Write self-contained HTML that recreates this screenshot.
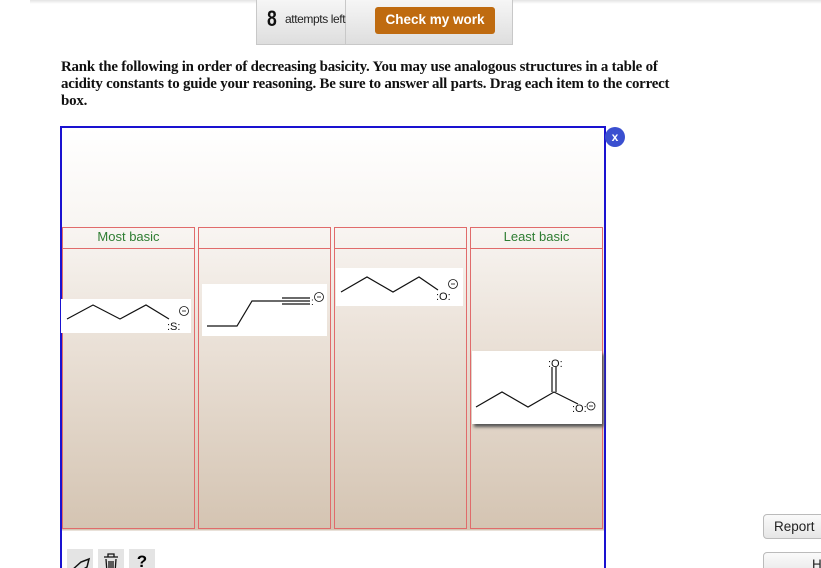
<!DOCTYPE html><html style="width:821px;height:568px;overflow:hidden"><head><style>
*{margin:0;padding:0;box-sizing:border-box}
body{width:821px;height:568px;overflow:hidden;background:#fff;position:relative;font-family:"Liberation Sans",sans-serif}
.a{position:absolute}
.col{position:absolute;top:227px;width:133px;height:302px;border:1px solid #e06b6b}
.hd{position:absolute;left:0;top:0;right:0;height:21px;border-bottom:1px solid #e06b6b;text-align:center;color:#2e7d32;font-size:13px;line-height:17px}
.card{position:absolute;background:#fff}
svg{position:absolute;left:0;top:0}
</style></head><body>
<div class="a" style="left:30px;top:0;width:791px;height:4px;background:linear-gradient(#e4e4e4,#fff)"></div>
<div class="a" style="left:256px;top:0;width:257px;height:45px;background:linear-gradient(#f6f6f6,#dedede);border:1px solid #c8c8c8;border-top:none"></div>
<div class="a" style="left:345px;top:0;width:1px;height:44px;background:#c8c8c8"></div>
<div class="a" style="left:267px;top:6px;font-size:22px;font-weight:bold;color:#111;transform:scaleX(0.8);transform-origin:left">8</div>
<div class="a" style="left:285px;top:12px;font-size:12px;color:#222;letter-spacing:-0.4px">attempts left</div>
<div class="a" style="left:375px;top:7px;width:120px;height:27px;background:#bf6b10;border-radius:3px;color:#fff;font-weight:bold;font-size:13.5px;line-height:26px;text-align:center">Check my work</div>
<div class="a" style="left:61px;top:59px;width:630px;font-family:'Liberation Serif',serif;font-weight:bold;font-size:14.9px;line-height:17px;color:#111;letter-spacing:-0.2px">Rank the following in order of decreasing basicity. You may use analogous structures in a table of acidity constants to guide your reasoning. Be sure to answer all parts. Drag each item to the correct box.</div>
<div class="a" style="left:60px;top:126px;width:546px;height:460px;border:2px solid #1a12d0;background:linear-gradient(#fff 0px,#f8f5f2 100px,#ece3da 200px,#d4c4b2 402px,#fff 403px)"></div>
<div class="a" style="left:605px;top:127px;width:20px;height:20px;border-radius:50%;background:#3a4fd0;color:#fff;font-weight:bold;font-size:12px;line-height:20px;text-align:center">x</div>
<div class="col" style="left:62px"><div class="hd">Most basic</div></div>
<div class="col" style="left:198px"><div class="hd"></div></div>
<div class="col" style="left:334px"><div class="hd"></div></div>
<div class="col" style="left:470px"><div class="hd">Least basic</div></div>
<div class="card" style="left:61px;top:299px;width:130px;height:34px"><svg width="130" height="34" fill="none" stroke="#111" stroke-width="1.2"><path d="M6 20L32 6L59 20L85 6L108 20"/><text x="106" y="31" font-size="11" fill="#111" stroke="none" font-family="Liberation Sans">:S:</text><circle cx="123" cy="12" r="4.5" stroke-width="0.8"/><path d="M121 12h4" stroke-width="0.8"/></svg></div>
<div class="card" style="left:202px;top:284px;width:125px;height:52px"><svg width="125" height="52" fill="none" stroke="#111" stroke-width="1.2"><path d="M5 42H35L50 17H80"/><path d="M80 14H108M80 17H108M80 20H108"/><text x="109" y="21" font-size="10" fill="#111" stroke="none">:</text><circle cx="117" cy="13" r="4.5" stroke-width="0.8"/><path d="M115 13h4" stroke-width="0.8"/></svg></div>
<div class="card" style="left:336px;top:268px;width:127px;height:38px"><svg width="127" height="38" fill="none" stroke="#111" stroke-width="1.2"><path d="M5 24L31 9L57 24L83 9L102 22"/><text x="100" y="32" font-size="11" fill="#111" stroke="none">:O:</text><circle cx="117" cy="16" r="4.5" stroke-width="0.8"/><path d="M115 16h4" stroke-width="0.8"/></svg></div>
<div class="card" style="left:472px;top:351px;width:130px;height:73px;box-shadow:2px 3px 3px #555"><svg width="130" height="73" fill="none" stroke="#111" stroke-width="1.2"><path d="M4 56L30 41L56 56L82 41L106 53"/><path d="M80 16V41M84 16V41"/><text x="76" y="16" font-size="11" fill="#111" stroke="none">:O:</text><text x="100" y="61" font-size="11" fill="#111" stroke="none">:O:</text><circle cx="119" cy="55" r="4" stroke-width="0.8"/><path d="M117 55h4" stroke-width="0.8"/></svg></div>
<div class="a" style="left:67px;top:549px;width:26px;height:26px;background:#e4e4e4"><svg width="26" height="26" fill="none" stroke="#111" stroke-width="1.5"><path d="M4 22L14 13L22 10L20 18L10 24Z"/></svg></div>
<div class="a" style="left:98px;top:549px;width:26px;height:26px;background:#e4e4e4"><svg width="26" height="26" fill="none" stroke="#111" stroke-width="1.3"><path d="M6 8H20M10 8V5H16V8M8 10L9 24H17L18 10M11 12V22M13 12V22M15 12V22"/></svg></div>
<div class="a" style="left:129px;top:549px;width:26px;height:26px;background:#e4e4e4;font-size:17px;font-weight:bold;text-align:center;line-height:26px">?</div>
<div class="a" style="left:763px;top:514px;width:70px;height:25px;border:1px solid #bbb;border-radius:4px;background:linear-gradient(#fafafa,#e6e6e6);font-size:13.5px;line-height:23px;padding-left:10px;color:#222">Report</div>
<div class="a" style="left:763px;top:552px;width:70px;height:25px;border:1px solid #bbb;border-radius:4px;background:linear-gradient(#fafafa,#e6e6e6);font-size:13.5px;line-height:23px;padding-left:48px;color:#222">Hi</div>
</body></html>
